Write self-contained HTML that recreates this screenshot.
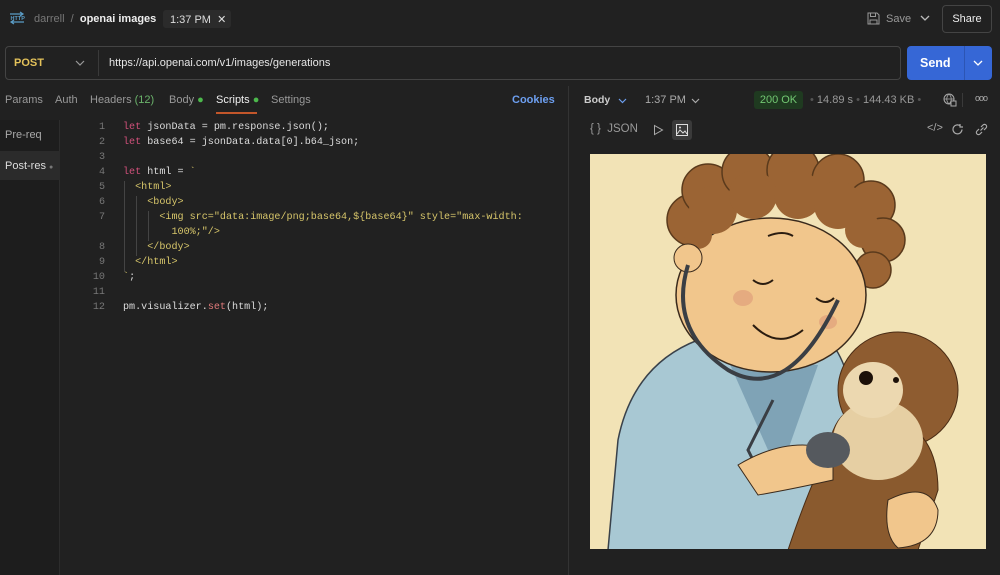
<!DOCTYPE html>
<html><head><meta charset="utf-8"><style>
*{margin:0;padding:0;box-sizing:border-box}
body{width:1000px;height:575px;overflow:hidden;background:#212121;font-family:"Liberation Sans",sans-serif;color:#cfcfcf;position:relative;font-size:11px}
.a{position:absolute;white-space:nowrap}
.mono{font-family:"Liberation Mono",monospace;font-size:10.1px}
.ln{position:absolute;width:45px;text-align:right;left:60px;color:#777}
.cd{position:absolute;left:123px;color:#dcdcdc}
.k{color:#d0507a}.t{color:#d6c56a}.f{color:#e07a7a}
.gd{position:absolute;width:1px;background:#444}
</style></head><body>
<!-- top bar -->
<svg class="a" style="left:8px;top:11px" width="18" height="14" viewBox="0 0 18 14"><path d="M2 3h13M12 1l3 2-3 2M16 11H3M6 9l-3 2 3 2" stroke="#5a9cc6" stroke-width="1.2" fill="none"/><text x="2.5" y="9" font-size="5.5" fill="#5a9cc6" font-family="Liberation Sans" font-weight="bold">HTTP</text></svg>
<div class="a" style="left:34px;top:13px;font-size:11px;color:#777">darrell&nbsp; /&nbsp; <b style="color:#eee">openai images</b></div>
<div class="a" style="left:163px;top:10px;width:68px;height:18px;background:#2b2b2b;border-radius:3px;font-size:11px;color:#ddd;padding:3px 7px">1:37 PM &nbsp;✕</div>
<svg class="a" style="left:867px;top:12px" width="13" height="13" viewBox="0 0 13 13"><path d="M1 1h9l2 2v9H1z M3.5 1v3.5h5V1 M3 12V8h7v4" stroke="#999" fill="none"/></svg>
<div class="a" style="left:886px;top:13px;font-size:11px;color:#999">Save</div>
<svg class="a" style="left:920px;top:15px" width="10" height="6"><path d="M1 1l4 4 4-4" stroke="#bbb" fill="none" stroke-width="1.3"/></svg>
<div class="a" style="left:942px;top:5px;width:50px;height:28px;border:1px solid #444;border-radius:4px;font-size:11px;color:#eee;text-align:center;line-height:26px">Share</div>
<!-- url bar -->
<div class="a" style="left:5px;top:46px;width:896px;height:34px;border:1px solid #444;border-radius:4px"></div>
<div class="a" style="left:14px;top:57px;font-size:11px;font-weight:bold;color:#e4c25a">POST</div>
<svg class="a" style="left:75px;top:60px" width="10" height="6"><path d="M1 1l4 4 4-4" stroke="#999" fill="none" stroke-width="1.2"/></svg>
<div class="a" style="left:98px;top:50px;width:1px;height:26px;background:#3a3a3a"></div>
<div class="a" style="left:109px;top:57px;font-size:11px;color:#e6e6e6">https://api.openai.com/v1/images/generations</div>
<div class="a" style="left:907px;top:46px;width:85px;height:34px;background:#3667d6;border-radius:4px"></div>
<div class="a" style="left:964px;top:46px;width:1px;height:34px;background:#2c55b4"></div>
<div class="a" style="left:920px;top:56px;font-size:12.5px;font-weight:bold;color:#fff">Send</div>
<svg class="a" style="left:973px;top:60px" width="10" height="6"><path d="M1 1l4 4 4-4" stroke="#fff" fill="none" stroke-width="1.3"/></svg>
<!-- tabs -->
<div class="a" style="left:5px;top:94px;font-size:11px;color:#999">Params</div>
<div class="a" style="left:55px;top:94px;font-size:11px;color:#999">Auth</div>
<div class="a" style="left:90px;top:94px;font-size:11px;color:#999">Headers <span style="color:#6bb36b">(12)</span></div>
<div class="a" style="left:169px;top:94px;font-size:11px;color:#999">Body <span style="color:#4cb84c">●</span></div>
<div class="a" style="left:216px;top:94px;font-size:11px;color:#eee">Scripts <span style="color:#4cb84c">●</span></div>
<div class="a" style="left:216px;top:112px;width:41px;height:2px;background:#c2562a"></div>
<div class="a" style="left:271px;top:94px;font-size:11px;color:#999">Settings</div>
<div class="a" style="left:512px;top:94px;font-size:11px;color:#6d9ff0;font-weight:bold">Cookies</div>
<!-- sidebar -->
<div class="a" style="left:0;top:120px;width:60px;height:455px;background:#1d1d1d;border-right:1px solid #2c2c2c"></div>
<div class="a" style="left:5px;top:129px;font-size:11px;color:#aaa">Pre-req</div>
<div class="a" style="left:0;top:151px;width:60px;height:29px;background:#2b2b2b"></div>
<div class="a" style="left:5px;top:160px;font-size:11px;color:#ddd">Post-res <span style="color:#777;font-size:7px">●</span></div>
<!-- code -->
<div class="mono">
<div class="ln" style="top:122px">1</div><div class="cd" style="top:122px"><span class="k">let</span> jsonData = pm.response.json();</div>
<div class="ln" style="top:137px">2</div><div class="cd" style="top:137px"><span class="k">let</span> base64 = jsonData.data[0].b64_json;</div>
<div class="ln" style="top:152px">3</div>
<div class="ln" style="top:167px">4</div><div class="cd" style="top:167px"><span class="k">let</span> html = <span class="t">`</span></div>
<div class="ln" style="top:182px">5</div><div class="cd t" style="top:182px">&nbsp;&nbsp;&lt;html&gt;</div>
<div class="ln" style="top:197px">6</div><div class="cd t" style="top:197px">&nbsp;&nbsp;&nbsp;&nbsp;&lt;body&gt;</div>
<div class="ln" style="top:212px">7</div><div class="cd t" style="top:212px">&nbsp;&nbsp;&nbsp;&nbsp;&nbsp;&nbsp;&lt;img src="data:image/png;base64,${base64}" style="max-width:</div>
<div class="cd t" style="top:227px">&nbsp;&nbsp;&nbsp;&nbsp;&nbsp;&nbsp;&nbsp;&nbsp;100%;"/&gt;</div>
<div class="ln" style="top:242px">8</div><div class="cd t" style="top:242px">&nbsp;&nbsp;&nbsp;&nbsp;&lt;/body&gt;</div>
<div class="ln" style="top:257px">9</div><div class="cd t" style="top:257px">&nbsp;&nbsp;&lt;/html&gt;</div>
<div class="ln" style="top:272px">10</div><div class="cd" style="top:272px"><span class="t">`</span>;</div>
<div class="ln" style="top:287px">11</div>
<div class="ln" style="top:302px">12</div><div class="cd" style="top:302px">pm.visualizer.<span class="f">set</span>(html);</div>
</div>
<div class="gd" style="left:124px;top:181px;height:91px"></div>
<div class="gd" style="left:136px;top:196px;height:60px"></div>
<div class="gd" style="left:148px;top:211px;height:30px"></div>
<!-- vertical divider -->
<div class="a" style="left:568px;top:86px;width:1px;height:489px;background:#333"></div>
<!-- right header -->
<div class="a" style="left:584px;top:94px;font-size:10.5px;color:#ccc;font-weight:bold">Body</div>
<svg class="a" style="left:618px;top:98px" width="9" height="6"><path d="M1 1l3.5 3.5L8 1" stroke="#6d9ff0" fill="none" stroke-width="1.2"/></svg>
<div class="a" style="left:645px;top:94px;font-size:11px;color:#aaa">1:37 PM</div>
<svg class="a" style="left:691px;top:98px" width="9" height="6"><path d="M1 1l3.5 3.5L8 1" stroke="#aaa" fill="none" stroke-width="1.2"/></svg>
<div class="a" style="left:754px;top:91px;width:49px;height:18px;background:#1f3a20;border-radius:3px;color:#72c772;font-size:11px;text-align:center;line-height:18px">200 OK</div>
<div class="a" style="left:810px;top:94px;font-size:11px;color:#999"><span style="color:#555">•</span> 14.89 s <span style="color:#555">•</span> 144.43 KB <span style="color:#555">•</span></div>
<svg class="a" style="left:943px;top:93px" width="14" height="14" viewBox="0 0 14 14"><circle cx="6" cy="6" r="5" stroke="#aaa" fill="none"/><path d="M1 6h10M6 1c-3 3-3 7 0 10M6 1c3 3 3 7 0 10" stroke="#aaa" fill="none" stroke-width=".8"/><rect x="8" y="8" width="5" height="5" fill="#212121" stroke="#aaa"/></svg>
<div class="a" style="left:962px;top:93px;width:1px;height:14px;background:#3a3a3a"></div>
<div class="a" style="left:975px;top:93px;font-size:9px;color:#aaa;letter-spacing:-1px">ooo</div>
<div class="a" style="left:590px;top:123px;font-size:11.5px;color:#999">{ } &nbsp;JSON</div>
<svg class="a" style="left:653px;top:124px" width="11" height="12"><path d="M1.5 1.5l8 4.5-8 4.5z" stroke="#aaa" fill="none"/></svg>
<div class="a" style="left:672px;top:120px;width:20px;height:20px;background:#3a3a3a;border-radius:3px"></div>
<svg class="a" style="left:676px;top:124px" width="12" height="12"><rect x=".5" y=".5" width="11" height="11" stroke="#ddd" fill="none"/><path d="M1 10l3-4 3 3 2-2 2 3" stroke="#ddd" fill="none"/><circle cx="4" cy="3.5" r="1" fill="#ddd"/></svg>
<div class="a" style="left:927px;top:122px;font-size:11px;color:#aaa">&lt;/&gt;</div>
<svg class="a" style="left:951px;top:123px" width="13" height="13"><path d="M11 6.5A4.5 4.5 0 1 1 9.5 3M9 1v3h3" stroke="#aaa" fill="none" stroke-width="1.2"/></svg>
<svg class="a" style="left:975px;top:123px" width="13" height="13"><path d="M5.5 7.5l3-3M4 6l-2 2a2 2 0 0 0 3 3l2-2M9 7l2-2a2 2 0 0 0-3-3L6 4" stroke="#aaa" fill="none" stroke-width="1.2"/></svg>
<!-- illustration -->
<svg class="a" style="left:588px;top:150px" width="400" height="402" viewBox="0 0 400 402">
<defs><clipPath id="c"><rect x="2" y="4" width="396" height="395"/></clipPath></defs>
<g clip-path="url(#c)">
<rect x="2" y="4" width="396" height="395" fill="#f2e3b6"/>
<path d="M20 400 L30 290 Q45 215 110 190 L180 215 L245 195 Q270 230 265 300 L230 400z" fill="#a8c8d3" stroke="#39414a" stroke-width="1.5"/>
<path d="M140 210 L180 300 L200 300 L230 215z" fill="#7fa3b6"/>
<g fill="#9b6434" stroke="#5a3a1c" stroke-width="1.5">
<circle cx="105" cy="70" r="26"/><circle cx="120" cy="40" r="26"/><circle cx="160" cy="22" r="26"/><circle cx="205" cy="20" r="26"/><circle cx="250" cy="30" r="26"/><circle cx="283" cy="55" r="24"/><circle cx="295" cy="90" r="22"/><circle cx="285" cy="120" r="18"/>
</g>
<ellipse cx="183" cy="145" rx="95" ry="77" fill="#f1c68c" stroke="#3a2a1c" stroke-width="1.5"/>
<g fill="#9b6434">
<circle cx="125" cy="60" r="24"/><circle cx="165" cy="45" r="24"/><circle cx="210" cy="45" r="24"/><circle cx="250" cy="55" r="24"/><circle cx="275" cy="80" r="18"/><circle cx="110" cy="85" r="14"/>
</g>
<circle cx="100" cy="108" r="14" fill="#f1c68c" stroke="#3a2a1c"/>
<ellipse cx="155" cy="148" rx="10" ry="8" fill="#e0a07a" opacity=".7"/>
<ellipse cx="240" cy="172" rx="9" ry="7" fill="#e0a07a" opacity=".7"/>
<path d="M165 130 q10 8 20 0 M228 148 q10 8 18 0 M165 175 q25 25 50 5 M180 86 q15-6 25 0" stroke="#2a1c10" stroke-width="2" fill="none"/>
<path d="M100 115 Q80 180 140 220 Q200 255 250 150" stroke="#3a3e44" stroke-width="4" fill="none"/>
<path d="M185 250 L160 300 L180 340" stroke="#3a3e44" stroke-width="3" fill="none"/>
<ellipse cx="310" cy="240" rx="60" ry="58" fill="#8e5c30" stroke="#4a2c14"/>
<path d="M240 300 Q250 240 300 265 Q350 280 350 340 L330 400 L200 400 Q220 340 240 300z" fill="#8a5a2e" stroke="#4a2c14"/>
<ellipse cx="290" cy="290" rx="45" ry="40" fill="#e6cfa3"/>
<ellipse cx="285" cy="240" rx="30" ry="28" fill="#ecd8b0"/>
<circle cx="278" cy="228" r="7" fill="#1c1008"/>
<circle cx="308" cy="230" r="3" fill="#1c1008"/>
<path d="M150 315 Q200 285 245 300 L245 330 Q200 340 170 345z" fill="#f1c68c" stroke="#3a2a1c"/>
<ellipse cx="240" cy="300" rx="22" ry="18" fill="#55595e"/>
<path d="M300 350 Q340 330 350 360 Q350 395 310 398 Q295 385 300 350z" fill="#f1c68c" stroke="#3a2a1c"/>
</g>
</svg>
</body></html>
